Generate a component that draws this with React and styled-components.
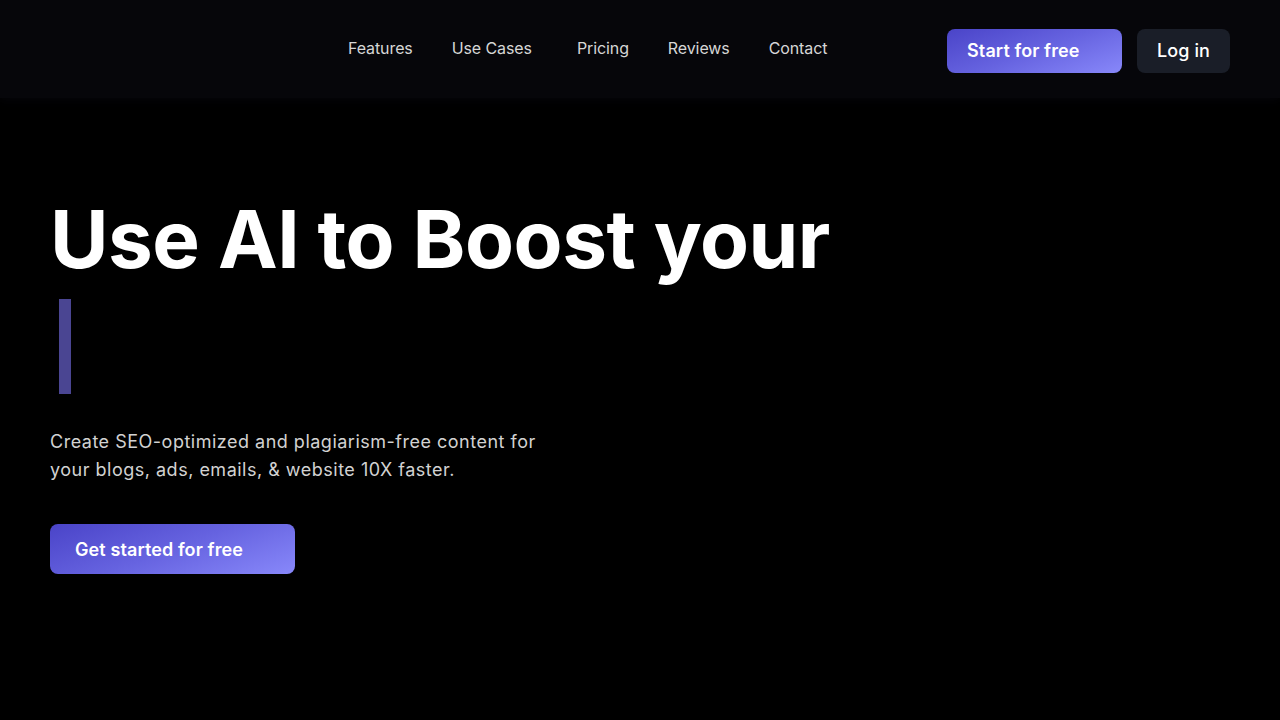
import React from 'react'
import styled, { createGlobalStyle } from 'styled-components'

const GlobalStyle = createGlobalStyle`
    html, body {
        margin: 0;
        padding: 0;
        background: #000;
        font-family: Inter, 'Noto Sans', sans-serif;
        color: #fff;
    }
    * {
        box-sizing: border-box;
    }
`

const Page = styled.div`
    min-height: 720px;
    background: #000;
`

const Header = styled.header`
    height: 98px;
    display: flex;
    align-items: center;
    padding: 0 50px;
    background: #06060a;
    box-shadow: 0 2px 10px rgba(10, 10, 20, 0.5);
`

const LogoSlot = styled.div`
    width: 298px;
    height: 40px;
`

const Nav = styled.nav`
    display: flex;
    align-items: center;
    gap: 39px;
    margin-top: -2px;
`

const NavLink = styled.a`
    font-size: 16px;
    color: #d6d6d6;
    text-decoration: none;
    margin-right: ${p => (p.$dropdown ? '6px' : '0')};
    letter-spacing: -0.1px;
`

const Actions = styled.div`
    margin-left: auto;
    display: flex;
    gap: 15px;
    margin-top: 3px;
`

const Button = styled.a`
    display: inline-flex;
    align-items: center;
    height: ${p => p.$height || 44}px;
    padding: 0 ${p => p.$pad || 20}px;
    width: ${p => (p.$width ? `${p.$width}px` : 'auto')};
    border-radius: 8px;
    font-size: 18px;
    color: #fff;
    text-decoration: none;
    letter-spacing: 0.1px;
    background: ${p =>
        p.$ghost
            ? '#1a1e28'
            : 'linear-gradient(160deg, #4a44c8 0%, #6663e0 50%, #8888fa 100%)'};
    font-weight: ${p => (p.$ghost ? 500 : 600)};
`

const Hero = styled.section`
    padding: 91px 50px 0;
`

const Title = styled.h1`
    margin: 0 0 7px;
    font-size: 80px;
    font-weight: 700;
    line-height: 100px;
    letter-spacing: -0.5px;
    color: #fff;
`

const TypeLine = styled.div`
    height: 100px;
    display: flex;
    align-items: center;
    padding-left: 9px;
`

const Cursor = styled.span`
    display: block;
    width: 12px;
    height: 95px;
    background: #4a4592;
`

const Lead = styled.p`
    margin: 32px 0 0;
    max-width: 520px;
    font-size: 18px;
    line-height: 28px;
    letter-spacing: 0.5px;
    color: #d2d2d2;
`

const CtaRow = styled.div`
    margin-top: 40px;
`

export default function App() {
    return (
        <Page>
            <GlobalStyle />
            <Header>
                <LogoSlot />
                <Nav>
                    <NavLink href="#">Features</NavLink>
                    <NavLink href="#" $dropdown>
                        Use Cases
                    </NavLink>
                    <NavLink href="#">Pricing</NavLink>
                    <NavLink href="#">Reviews</NavLink>
                    <NavLink href="#">Contact</NavLink>
                </Nav>
                <Actions>
                    <Button href="#" $width={175}>
                        Start for free
                    </Button>
                    <Button href="#" $ghost>
                        Log in
                    </Button>
                </Actions>
            </Header>
            <Hero>
                <Title>Use AI to Boost your</Title>
                <TypeLine>
                    <Cursor />
                </TypeLine>
                <Lead>
                    Create SEO-optimized and plagiarism-free content for your
                    blogs, ads, emails, &amp; website 10X faster.
                </Lead>
                <CtaRow>
                    <Button href="#" $width={245} $height={50} $pad={25}>
                        Get started for free
                    </Button>
                </CtaRow>
            </Hero>
        </Page>
    )
}
